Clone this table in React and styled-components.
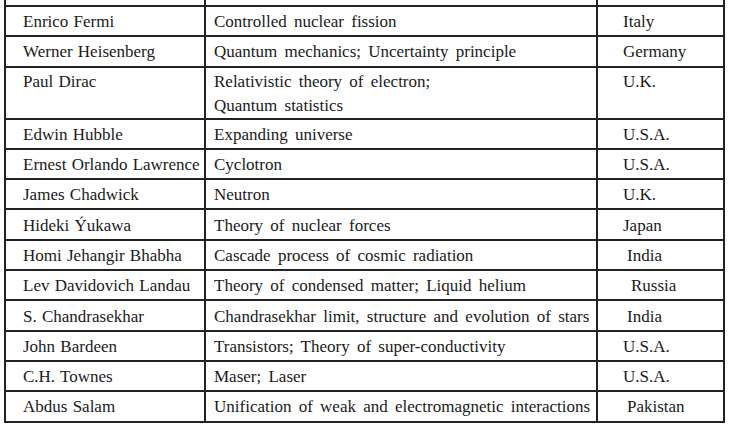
import React from 'react';
import styled, { createGlobalStyle } from 'styled-components';

const GlobalStyle = createGlobalStyle`
  html, body {
    margin: 0;
    padding: 0;
    background: #ffffff;
  }
`;

const rows = [
  { name: 'Enrico Fermi', work: ['Controlled nuclear fission'], country: 'Italy' },
  { name: 'Werner Heisenberg', work: ['Quantum mechanics; Uncertainty principle'], country: 'Germany' },
  { name: 'Paul Dirac', work: ['Relativistic theory of electron;', 'Quantum statistics'], country: 'U.K.', tall: true },
  { name: 'Edwin Hubble', work: ['Expanding universe'], country: 'U.S.A.' },
  { name: 'Ernest Orlando Lawrence', work: ['Cyclotron'], country: 'U.S.A.' },
  { name: 'James Chadwick', work: ['Neutron'], country: 'U.K.' },
  { name: 'Hideki Ýukawa', work: ['Theory of nuclear forces'], country: 'Japan' },
  { name: 'Homi Jehangir Bhabha', work: ['Cascade process of cosmic radiation'], country: 'India', shift: 4 },
  { name: 'Lev Davidovich Landau', work: ['Theory of condensed matter; Liquid helium'], country: 'Russia', shift: 8 },
  { name: 'S. Chandrasekhar', work: ['Chandrasekhar limit, structure and evolution of stars'], country: 'India', shift: 4 },
  { name: 'John Bardeen', work: ['Transistors; Theory of super-conductivity'], country: 'U.S.A.' },
  { name: 'C.H. Townes', work: ['Maser; Laser'], country: 'U.S.A.' },
  { name: 'Abdus Salam', work: ['Unification of weak and electromagnetic interactions'], country: 'Pakistan', shift: 4 },
];

const Page = styled.div`
  padding: 0 0 0 4px;
  font-family: "Liberation Serif", "Times New Roman", serif;
  color: #1a1a1a;
`;

const Table = styled.table`
  border-collapse: collapse;
  table-layout: fixed;
  width: 721px;
  font-size: 17px;
`;

const Line = '2px solid #222';

const StubCell = styled.td`
  height: 5px;
  padding: 0;
  border-left: ${Line};
  border-right: ${Line};
`;

const Cell = styled.td`
  border: ${Line};
  height: ${p => (p.$tall ? 47 : 26.3)}px;
  padding: 2px 2px 0 ${p => p.$indent}px;
  vertical-align: ${p => (p.$tall ? 'top' : 'middle')};
  line-height: ${p => (p.$tall ? '24px' : '18px')};
  white-space: nowrap;
  word-spacing: ${p => p.$spacing}px;
`;

const WorkLine = styled.div``;

export default function App() {
  return (
    <Page>
      <GlobalStyle />
      <Table>
        <colgroup>
          <col style={{ width: 200 }} />
          <col style={{ width: 392 }} />
          <col style={{ width: 127 }} />
        </colgroup>
        <tbody>
          <tr>
            <StubCell />
            <StubCell />
            <StubCell />
          </tr>
          {rows.map(r => (
            <tr key={r.name}>
              <Cell $tall={r.tall} $indent={17} $spacing={1}>{r.name}</Cell>
              <Cell $tall={r.tall} $indent={8} $spacing={3}>
                {r.work.map(w => (
                  <WorkLine key={w}>{w}</WorkLine>
                ))}
              </Cell>
              <Cell $tall={r.tall} $indent={25 + (r.shift || 0)} $spacing={1}>{r.country}</Cell>
            </tr>
          ))}
        </tbody>
      </Table>
    </Page>
  );
}
